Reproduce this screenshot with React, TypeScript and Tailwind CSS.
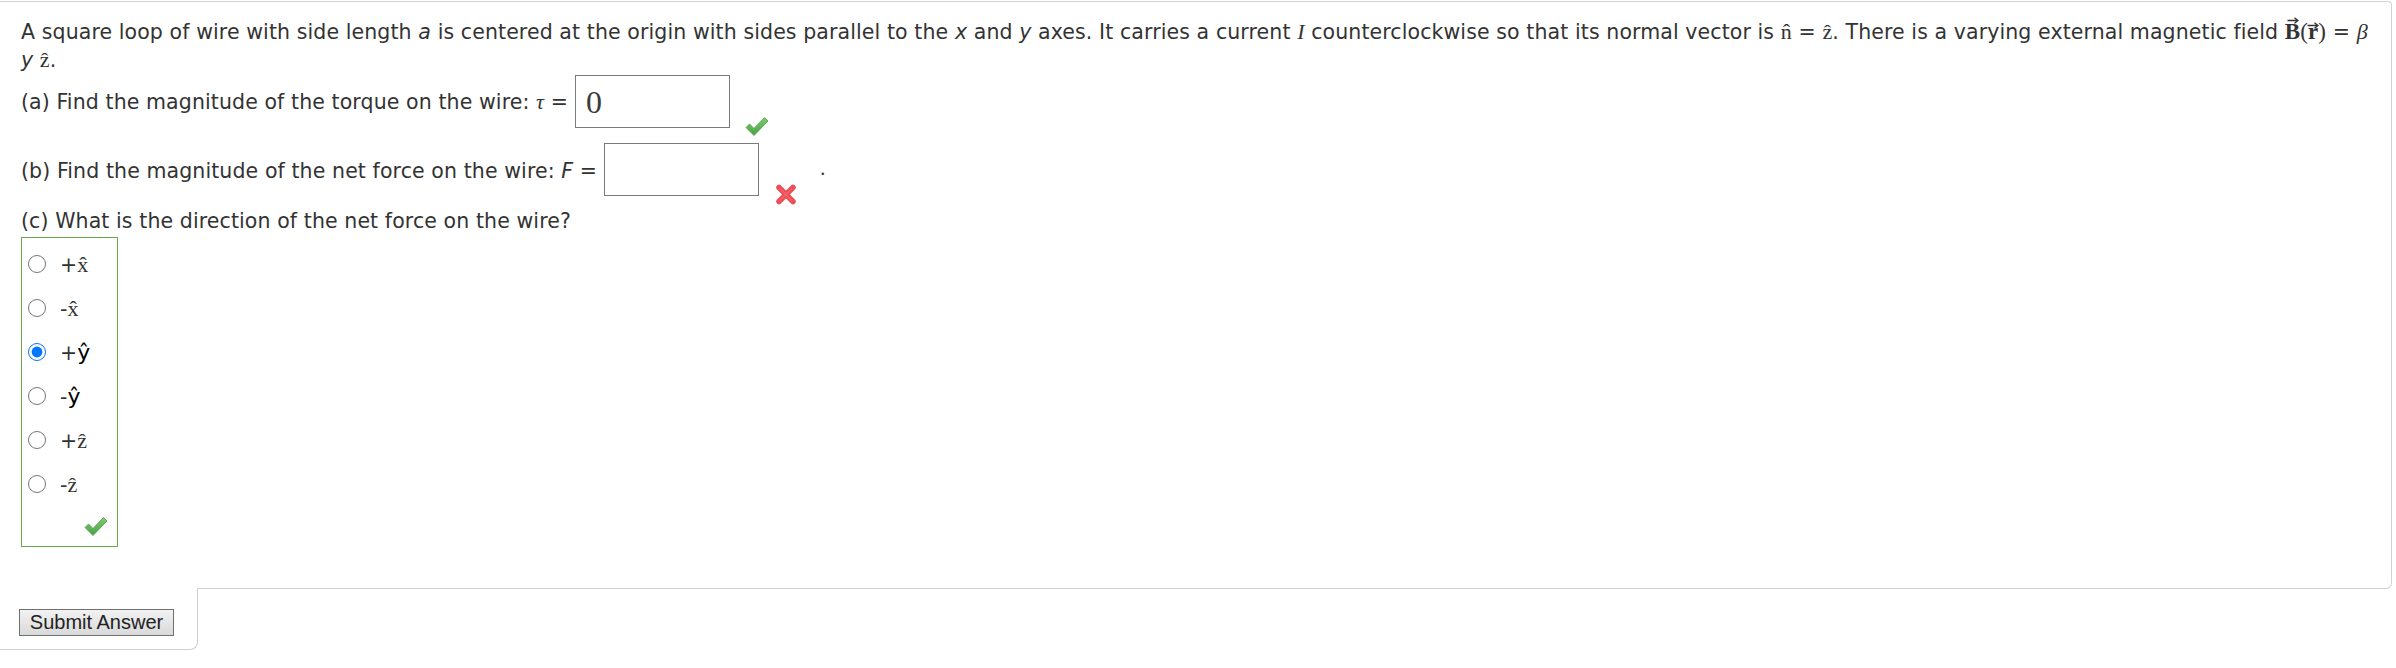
import type { ReactNode } from "react";

const serif = "font-['Liberation_Serif','DejaVu_Serif',serif]";

function Vec({ children, top }: { children: ReactNode; top: string }) {
  return (
    <span className={`relative inline-block font-bold ${serif}`}>
      {children}
      <svg
        className={`absolute left-1/2 -translate-x-1/2 w-[12px] h-[7px] ${top}`}
        viewBox="0 0 12 7"
      >
        <path d="M0.5 3.5H11M7.5 0.8L11 3.5L7.5 6.2" stroke="currentColor" fill="none" strokeWidth="1.4" />
      </svg>
    </span>
  );
}

function Check() {
  return (
    <svg viewBox="0 0 24 21" className="w-[24px] h-[21px]">
      <defs>
        <linearGradient id="g" x1="0" y1="0" x2="0" y2="1">
          <stop offset="0" stopColor="#7ccf6e" />
          <stop offset="1" stopColor="#4aa043" />
        </linearGradient>
      </defs>
      <path d="M1 11.5L4.5 8L9 12.5L19.5 1.5L23 5L9 19.5Z" fill="url(#g)" stroke="#4d9a47" strokeWidth="0.8" strokeLinejoin="round" />
    </svg>
  );
}

function Cross() {
  return (
    <svg viewBox="0 0 22 21" className="w-[22px] h-[21px]">
      <path d="M4 3.5L18 17.5M18 3.5L4 17.5" stroke="#ee4c55" strokeWidth="5.5" strokeLinecap="round" />
      <path d="M5 4.5L17 16.5M17 4.5L5 16.5" stroke="#f57a80" strokeWidth="1.2" strokeLinecap="round" opacity="0.6" />
    </svg>
  );
}

const options: { sign: string; axis: ReactNode }[] = [
  { sign: "+", axis: <span className={`${serif} text-[22px]`}>x&#770;</span> },
  { sign: "-", axis: <span className={`${serif} text-[22px]`}>x&#770;</span> },
  { sign: "+", axis: <span className="text-[22px] text-black">ŷ</span> },
  { sign: "-", axis: <span className="text-[22px] text-black">ŷ</span> },
  { sign: "+", axis: <span className={`${serif} text-[22px]`}>ẑ</span> },
  { sign: "-", axis: <span className={`${serif} text-[22px]`}>ẑ</span> },
];

export default function App() {
  return (
    <div className="min-h-screen bg-white pt-px pr-[4px] text-[#333] text-[20.5px] tracking-[0.1px] font-['DejaVu_Sans','Verdana',sans-serif]">
      <div className="h-[588px] border-t border-r border-b border-[#d2d2d2] rounded-tr-[4px] rounded-br-[6px] pl-[21px] pt-[15px]">
        <p className="leading-[28px]">
          <span className="block whitespace-nowrap">
            A square loop of wire with side length <i>a</i> is centered at the origin with sides parallel to the{" "}
            <i>x</i> and <i>y</i> axes. It carries a current <span className={`${serif} italic text-[22px]`}>I</span>{" "}
            counterclockwise so that its normal vector is <span className={`${serif} text-[22px]`}>n&#770;</span> ={" "}
            <span className={`${serif} text-[22px]`}>ẑ</span>. There is a varying external magnetic field{" "}
            <span className="text-[23px]">
              <Vec top="top-[-1px]">B</Vec>
              <span className={serif}>(</span>
              <Vec top="top-[4px]">r</Vec>
              <span className={serif}>)</span>
            </span>{" "}
            = <span className={`${serif} italic text-[22px]`}>β</span>
          </span>
          <span className="block">
            <i>y</i> <span className={`${serif} text-[22px]`}>ẑ</span>.
          </span>
        </p>

        <div className="flex items-center h-[53px] mt-px">
          <span className="whitespace-nowrap">
            (a) Find the magnitude of the torque on the wire: <span className={`${serif} italic text-[22px]`}>τ</span> =
          </span>
          <div className="ml-[7px] w-[155px] h-[53px] border border-[#7a7a7a] flex items-center pl-[10px]">
            <span className={`${serif} text-[32px] leading-none text-[#3a3a3a]`}>0</span>
          </div>
          <div className="self-end -mb-[9px] ml-[15px]">
            <Check />
          </div>
        </div>

        <div className="flex items-center h-[53px] mt-[15px]">
          <span className="mt-[4px] whitespace-nowrap">
            (b) Find the magnitude of the net force on the wire: <i>F</i> =
          </span>
          <div className="ml-[7px] w-[155px] h-[53px] border border-[#7a7a7a]" />
          <div className="self-end -mb-[9px] ml-[16px]">
            <Cross />
          </div>
          <span className={`${serif} ml-[23px] mt-[-4px] text-[20px]`}>.</span>
        </div>

        <p className="leading-[28px] mt-[11px]">(c) What is the direction of the net force on the wire?</p>

        <div className="mt-[2px] w-[97px] h-[310px] border border-[#67a84a] pt-[4px]">
          {options.map((o, i) => (
            <label key={i} className="flex items-center h-[44px]">
              <input
                type="radio"
                name="dir"
                defaultChecked={i === 2}
                className="m-0 ml-[6px] w-[18px] h-[18px] accent-[#0075ff]"
              />
              <span className="ml-[14px]">
                {o.sign}
                {o.axis}
              </span>
            </label>
          ))}
          <div className="mt-[10px] ml-[62px]">
            <Check />
          </div>
        </div>
      </div>

      <div className="relative -mt-px w-[198px] h-[62px] bg-white border-r border-b border-[#cfcfcf] rounded-br-[8px] pl-[19px] pt-[19px]">
        <button
          type="button"
          className="w-[155px] h-[27px] border border-[#707070] bg-linear-to-b from-[#f2f2f2] to-[#d9d9d9] text-[20px] leading-none text-[#222] tracking-normal font-['Liberation_Sans',Arial,sans-serif]"
        >
          Submit Answer
        </button>
      </div>
    </div>
  );
}
